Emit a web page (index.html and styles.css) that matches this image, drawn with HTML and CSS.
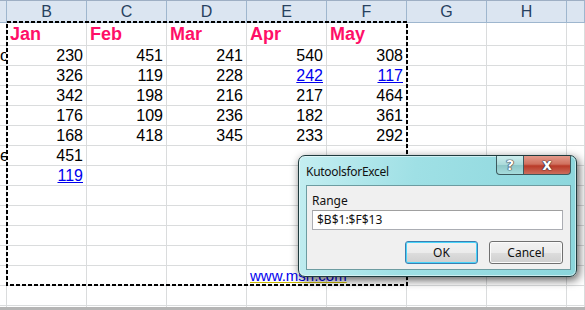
FILE: index.html
```html
<!DOCTYPE html>
<html lang="en">
<head>
    <meta charset="UTF-8">
    <title>Kutools range</title>
    <link rel="stylesheet" href="styles.css">
</head>
<body>
    <div class="sheet">
        <div class="row head">
            <div class="c"></div><div class="c">B</div><div class="c">C</div><div class="c">D</div><div class="c">E</div><div class="c">F</div><div class="c">G</div><div class="c">H</div><div class="c"></div>
        </div>
        <div class="row first">
            <div class="c"></div><div class="c m">Jan</div><div class="c m">Feb</div><div class="c m">Mar</div><div class="c m">Apr</div><div class="c m">May</div><div class="c"></div><div class="c"></div><div class="c"></div>
        </div>
        <div class="row">
            <div class="c a">o</div><div class="c n">230</div><div class="c n">451</div><div class="c n">241</div><div class="c n">540</div><div class="c n">308</div><div class="c"></div><div class="c"></div><div class="c"></div>
        </div>
        <div class="row">
            <div class="c"></div><div class="c n">326</div><div class="c n">119</div><div class="c n">228</div><div class="c n"><a href="#">242</a></div><div class="c n"><a href="#">117</a></div><div class="c"></div><div class="c"></div><div class="c"></div>
        </div>
        <div class="row">
            <div class="c"></div><div class="c n">342</div><div class="c n">198</div><div class="c n">216</div><div class="c n">217</div><div class="c n">464</div><div class="c"></div><div class="c"></div><div class="c"></div>
        </div>
        <div class="row">
            <div class="c"></div><div class="c n">176</div><div class="c n">109</div><div class="c n">236</div><div class="c n">182</div><div class="c n">361</div><div class="c"></div><div class="c"></div><div class="c"></div>
        </div>
        <div class="row">
            <div class="c"></div><div class="c n">168</div><div class="c n">418</div><div class="c n">345</div><div class="c n">233</div><div class="c n">292</div><div class="c"></div><div class="c"></div><div class="c"></div>
        </div>
        <div class="row">
            <div class="c a">e</div><div class="c n">451</div><div class="c"></div><div class="c"></div><div class="c"></div><div class="c"></div><div class="c"></div><div class="c"></div><div class="c"></div>
        </div>
        <div class="row">
            <div class="c"></div><div class="c n"><a href="#">119</a></div><div class="c"></div><div class="c"></div><div class="c"></div><div class="c"></div><div class="c"></div><div class="c"></div><div class="c"></div>
        </div>
        <div class="row">
            <div class="c"></div><div class="c"></div><div class="c"></div><div class="c"></div><div class="c"></div><div class="c"></div><div class="c"></div><div class="c"></div><div class="c"></div>
        </div>
        <div class="row">
            <div class="c"></div><div class="c"></div><div class="c"></div><div class="c"></div><div class="c"></div><div class="c"></div><div class="c"></div><div class="c"></div><div class="c"></div>
        </div>
        <div class="row">
            <div class="c"></div><div class="c"></div><div class="c"></div><div class="c"></div><div class="c"></div><div class="c"></div><div class="c"></div><div class="c"></div><div class="c"></div>
        </div>
        <div class="row">
            <div class="c"></div><div class="c"></div><div class="c"></div><div class="c"></div><div class="c"></div><div class="c"></div><div class="c"></div><div class="c"></div><div class="c"></div>
        </div>
        <div class="row">
            <div class="c"></div><div class="c"></div><div class="c"></div><div class="c"></div><div class="c link"><a href="#">www.msn.com</a></div><div class="c"></div><div class="c"></div><div class="c"></div><div class="c"></div>
        </div>
        <div class="row">
            <div class="c"></div><div class="c"></div><div class="c"></div><div class="c"></div><div class="c"></div><div class="c"></div><div class="c"></div><div class="c"></div><div class="c"></div>
        </div>
        <div class="row">
            <div class="c"></div><div class="c"></div><div class="c"></div><div class="c"></div><div class="c"></div><div class="c"></div><div class="c"></div><div class="c"></div><div class="c"></div>
        </div>

        <!-- copy marquee round $B$1:$F$13 -->
        <svg class="marquee" width="402" height="265" viewBox="0 0 402 265">
            <rect x="1" y="1" width="400" height="263" fill="none" stroke="#000" stroke-width="2" stroke-dasharray="4 2"/>
        </svg>

        <div class="dialog">
            <div class="titlebar">
                <span class="title">KutoolsforExcel</span>
                <div class="caption">
                    <span class="help">?</span>
                    <span class="close">x</span>
                </div>
            </div>
            <div class="client">
                <label class="lbl">Range</label>
                <div class="input">$B$1:$F$13</div>
                <div class="buttons">
                    <button class="btn ok">OK</button>
                    <button class="btn">Cancel</button>
                </div>
            </div>
        </div>
    </div>
    <div class="bottom"></div>
</body>
</html>
```

FILE: styles.css
```css
*{
    box-sizing: border-box;
}
body{
    margin: 0;
    background: #fff;
    font-family: "Liberation Sans", Arial, sans-serif;
    overflow: hidden;
}
.sheet{
    position: relative;
    height: 307px;
    overflow: hidden;
}
.row{
    display: grid;
    grid-template-columns: 7px repeat(7, 80px) 1fr;
    height: 20px;
}
.c{
    border-right: 1px solid #dadcdd;
    border-bottom: 1px solid #dadcdd;
    font-size: 16px;
    line-height: 19px;
    white-space: nowrap;
    overflow: hidden;
}
.head{
    height: 23px;
    background: #dbe5f1;
    border-top: 1px solid #9eafc4;
}
.head .c{
    border-right-color: #9eb6ce;
    border-bottom-color: #9eb6ce;
    text-align: center;
    color: #27415f;
    font-size: 16px;
    line-height: 21px;
}
.first{height: 23px;}
.m{
    color: #ff0f68;
    font-weight: bold;
    font-size: 18px;
    line-height: 23px;
    padding-left: 3px;
}
.n{
    text-align: right;
    padding-right: 3px;
}
.a{
    direction: rtl;
    text-align: left;
    text-indent: -3px;
}
.n a, .link a{
    color: #0000ee;
    text-decoration: underline;
}
.link{
    overflow: visible;
    padding-left: 3px;
    font-size: 15px;
}
.link a{text-decoration-color: #c9b800;}
.marquee{
    position: absolute;
    left: 6px;
    top: 21px;
}
.bottom{
    height: 3px;
    background: #b5b5b5;
}

/* dialog */
.dialog{
    position: absolute;
    left: 298px;
    top: 155px;
    width: 279px;
    height: 122px;
    display: flex;
    flex-direction: column;
    border: 1px solid #1f3b3e;
    border-radius: 7px;
    background: linear-gradient(100deg, #c4eef1 0%, #9fe0e5 40%, #8bd6dc 100%);
    box-shadow: 0 0 0 1px rgba(255,255,255,0.5) inset, 2px 3px 10px rgba(0,0,0,0.65);
    font-family: "Noto Sans", "DejaVu Sans", sans-serif;
}
.titlebar{
    height: 29px;
    display: flex;
    justify-content: space-between;
    padding-left: 7px;
}
.title{
    font-size: 12px;
    padding-top: 7px;
    color: #111;
    letter-spacing: -0.3px;
}
.caption{
    display: flex;
    margin-right: 5px;
}
.caption span{
    height: 19px;
    display: flex;
    justify-content: center;
    align-items: center;
    border: 1px solid #3d5a5e;
    border-top: none;
    font-weight: bold;
    color: #fff;
    text-shadow: 0 0 1px #223, 0 0 1px #223, 0 0 1px #223;
    font-family: "DejaVu Sans", sans-serif;
}
.help{
    width: 28px;
    border-radius: 0 0 0 4px;
    background: linear-gradient(#cdeeee, #a9d9d9 50%, #8ec7c8 51%, #a6dcdc);
    font-size: 14px;
}
.close{
    width: 47px;
    border-radius: 0 0 4px 0;
    border-left: none !important;
    background: linear-gradient(#e49a8b, #d0705e 45%, #b93a28 55%, #cc6d5c);
    font-size: 15px;
}
.client{
    flex: 1;
    margin: 0 5px 6px 7px;
    background: #f0f0f0;
    border: 1px solid #6d9ca1;
    padding: 7px 7px 0 5px;
    display: flex;
    flex-direction: column;
    font-size: 12px;
}
.lbl{
    line-height: 16px;
    color: #111;
}
.input{
    margin-top: 1px;
    height: 20px;
    background: #fff;
    border: 1px solid #abadb3;
    border-top-color: #a0a0a0;
    padding-left: 4px;
    line-height: 18px;
    color: #111;
}
.buttons{
    display: flex;
    justify-content: flex-end;
    gap: 11px;
    margin-top: 11px;
}
.btn{
    height: 23px;
    width: 74px;
    font-family: "Noto Sans", "DejaVu Sans", sans-serif;
    font-size: 12px;
    color: #111;
    border: 1px solid #707070;
    border-radius: 3px;
    background: linear-gradient(#f2f2f2 0%, #ebebeb 50%, #dddddd 51%, #cfcfcf 100%);
    box-shadow: inset 0 0 0 1px #fbfbfb;
    padding: 0;
}
.ok{
    width: 73px;
    border-color: #3c7fb1;
    box-shadow: inset 0 0 0 1px #48d4fa;
}
```
